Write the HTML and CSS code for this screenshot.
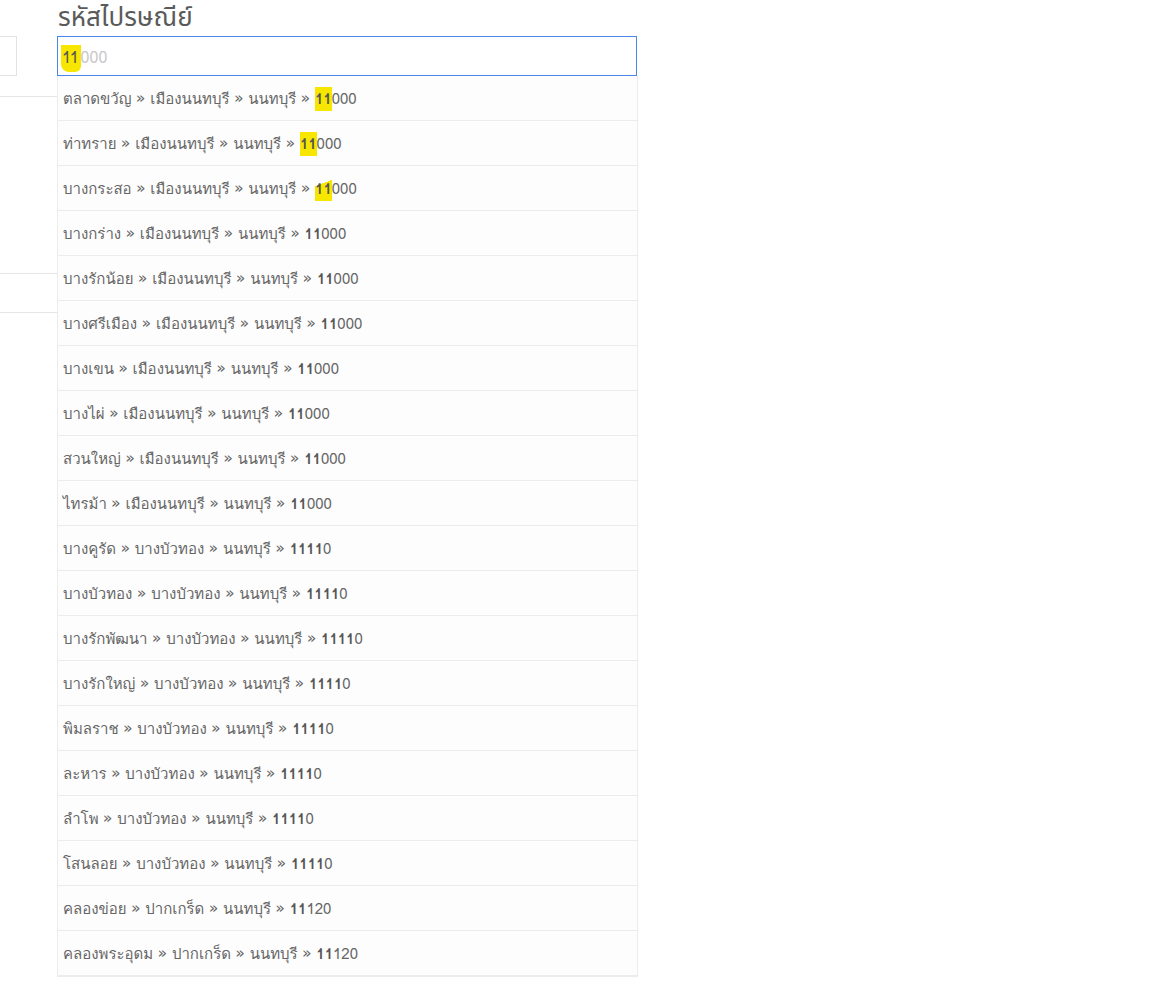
FILE: index.html
```html
<!DOCTYPE html>
<html lang="th">
<head>
<meta charset="utf-8">
<title>รหัสไปรษณีย์</title>
<link rel="stylesheet" href="styles.css">
</head>
<body>
<div class="bg">
  <div class="bg-box"></div>
  <div class="bg-line l1"></div>
  <div class="bg-line l2"></div>
  <div class="bg-line l3"></div>
</div>
<div class="field">
  <h1 class="label">รหัสไปรษณีย์</h1>
  <div class="input"><span class="typed"><span class="mark">11</span></span><span class="hint">000</span></div>
  <ul class="list">
    <li>ตลาดขวัญ » เมืองนนทบุรี » นนทบุรี » <b class="hl">11</b>000</li>
    <li>ท่าทราย » เมืองนนทบุรี » นนทบุรี » <b class="hl">11</b>000</li>
    <li>บางกระสอ » เมืองนนทบุรี » นนทบุรี » <b class="hl part">11</b>000</li>
    <li>บางกร่าง » เมืองนนทบุรี » นนทบุรี » <b>11</b>000</li>
    <li>บางรักน้อย » เมืองนนทบุรี » นนทบุรี » <b>11</b>000</li>
    <li>บางศรีเมือง » เมืองนนทบุรี » นนทบุรี » <b>11</b>000</li>
    <li>บางเขน » เมืองนนทบุรี » นนทบุรี » <b>11</b>000</li>
    <li>บางไผ่ » เมืองนนทบุรี » นนทบุรี » <b>11</b>000</li>
    <li>สวนใหญ่ » เมืองนนทบุรี » นนทบุรี » <b>11</b>000</li>
    <li>ไทรม้า » เมืองนนทบุรี » นนทบุรี » <b>11</b>000</li>
    <li>บางคูรัด » บางบัวทอง » นนทบุรี » <b>1111</b>0</li>
    <li>บางบัวทอง » บางบัวทอง » นนทบุรี » <b>1111</b>0</li>
    <li>บางรักพัฒนา » บางบัวทอง » นนทบุรี » <b>1111</b>0</li>
    <li>บางรักใหญ่ » บางบัวทอง » นนทบุรี » <b>1111</b>0</li>
    <li>พิมลราช » บางบัวทอง » นนทบุรี » <b>1111</b>0</li>
    <li>ละหาร » บางบัวทอง » นนทบุรี » <b>1111</b>0</li>
    <li>ลำโพ » บางบัวทอง » นนทบุรี » <b>1111</b>0</li>
    <li>โสนลอย » บางบัวทอง » นนทบุรี » <b>1111</b>0</li>
    <li>คลองข่อย » ปากเกร็ด » นนทบุรี » <b>11</b>120</li>
    <li>คลองพระอุดม » ปากเกร็ด » นนทบุรี » <b>11</b>120</li>
  </ul>
</div>
</body>
</html>
```
FILE: styles.css
```css
html, body {
  margin: 0;
  padding: 0;
  background: #fff;
}
body {
  font-family: "Loma", "Liberation Sans", sans-serif;
  color: #555;
  width: 1151px;
  height: 998px;
  overflow: hidden;
  position: relative;
}
.bg {
  position: absolute;
  left: 0;
  top: 0;
  width: 60px;
  height: 400px;
}
.bg-box {
  position: absolute;
  left: -10px;
  top: 36px;
  width: 25px;
  height: 38px;
  border: 1px solid #e3e3e3;
}
.bg-line {
  position: absolute;
  left: 0;
  width: 58px;
  height: 1px;
  background: #e6e6e6;
}
.l1 { top: 96px; }
.l2 { top: 273px; }
.l3 { top: 312px; }
.field {
  position: absolute;
  left: 57px;
  top: 0;
  width: 581px;
}
.label {
  margin: 0;
  height: 36px;
  line-height: 36px;
  font-family: "Noto Sans Thai", "Noto Sans", sans-serif;
  font-size: 26px;
  font-weight: normal;
  color: #5a5a5a;
  padding-left: 1px;
}
.input {
  box-sizing: border-box;
  width: 580px;
  height: 40px;
  border: 1px solid #4a86e8;
  padding: 2px 0 0 4px;
  line-height: 38px;
  font-size: 16px;
  color: #666;
  background: #fff;
}
.typed { color: #555; }
.mark {
  background: #f7e600;
  border-radius: 0 0 6px 8px;
  padding: 0 2px 2px 1px;
  margin-left: -1px;
}
.hint { color: #c8c8c8; }
.list {
  list-style: none;
  margin: 0;
  padding: 0;
  border: 1px solid #ececec;
  border-top: 0;
  border-bottom-width: 2px;
  background: #fdfdfd;
}
.list li {
  box-sizing: border-box;
  height: 45px;
  line-height: 44px;
  padding: 1px 0 0 5px;
  font-size: 15px;
  color: #666;
  border-bottom: 1px solid #ececec;
  white-space: nowrap;
}
.list li:last-child { border-bottom: 0; height: 44px; }
.list b {
  color: #555;
  font-weight: bold;
}
.hl {
  background: #f7e600;
}
.part {
  background: linear-gradient(160deg, transparent 30%, #f7e600 30%);
}
```
